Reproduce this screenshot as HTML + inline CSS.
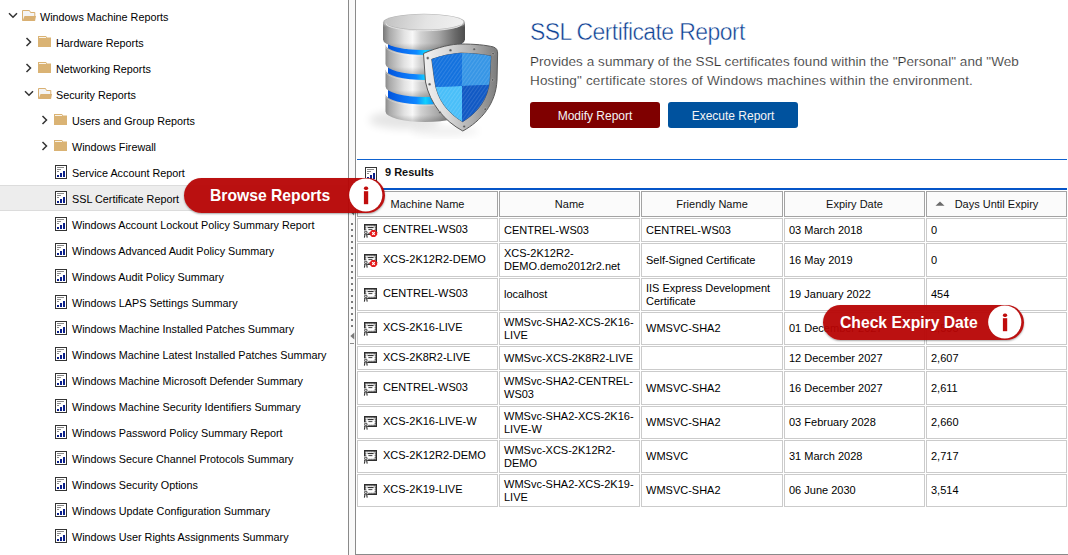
<!DOCTYPE html>
<html><head><meta charset="utf-8">
<style>
*{margin:0;padding:0;box-sizing:border-box}
html,body{width:1068px;height:555px;overflow:hidden;background:#fff}
body{position:relative;font-family:"Liberation Sans",sans-serif;color:#000}
.a{position:absolute}
.tr{position:absolute;font-size:10.8px;line-height:13px;white-space:nowrap;color:#000}
.sel{position:absolute;left:0;top:185px;width:348px;height:26px;background:#ededed;border-top:1px solid #dcdcdc;border-bottom:1px solid #dcdcdc}
.split1{position:absolute;left:348px;top:0;width:1px;height:555px;background:#8a8a8a}
.split2{position:absolute;left:349px;top:0;width:6px;height:555px;background:#f9f9f9}
.split3{position:absolute;left:355px;top:0;width:1px;height:555px;background:#8a8a8a}
.dot{position:absolute;left:351px;width:2px;height:2px;background:#7a7a7a}
.c{position:absolute;border:1px solid #cbcbcb;background:#fff;font-size:11px;line-height:13px;color:#000;padding:0 0 0 4px;white-space:nowrap}
.h{position:absolute;border:1px solid #a3a3a3;background:#fbfbfb;font-size:11px;line-height:13px;color:#111;text-align:center;white-space:nowrap}
.btn{position:absolute;top:102px;height:26px;border-radius:3px;color:#f4f4f4;font-size:12px;line-height:28px;text-align:center}
.call{position:absolute;height:35px;border-radius:17.5px;background:rgba(183,4,4,.95);box-shadow:0 1px 2px rgba(0,0,0,.35)}
.call span{position:absolute;color:#fff;font-weight:bold;font-size:15.7px;line-height:18px;white-space:nowrap}
.ci{position:absolute;width:34px;height:34px;border-radius:50%;background:#fff;border:2px solid #b91212}
</style></head><body>

<!-- TREE -->
<div class="sel"></div>
<svg class="a" style="left:8px;top:12px" width="10" height="7" viewBox="0 0 10 7"><path d="M1 1.2 L5 5.2 L9 1.2" fill="none" stroke="#333" stroke-width="1.5"/></svg>
<svg class="a" style="left:22px;top:10px" width="15" height="11" viewBox="0 0 15 11"><path d="M0.5 0.5 H7.5 L8.5 2.5 H12.8 V10.5 H0.5 Z" fill="#f4f4f4" stroke="#d9b072" stroke-width="1"/><path d="M2.5 6 H14 L12.6 11 H0.5 Z" fill="#d9b072"/></svg>
<div class="tr" style="left:40px;top:10.7px">Windows Machine Reports</div>
<svg class="a" style="left:25px;top:37px" width="8" height="10" viewBox="0 0 8 10"><path d="M1.5 1 L5.5 5 L1.5 9" fill="none" stroke="#333" stroke-width="1.5"/></svg>
<svg class="a" style="left:38px;top:36px" width="13" height="11" viewBox="0 0 13 11"><path d="M0 0 H8 L9 1.5 H13 V11 H0 Z" fill="#dab374"/><rect x="1" y="1" width="7" height="1" fill="#fff" opacity=".85"/></svg>
<div class="tr" style="left:56px;top:36.7px">Hardware Reports</div>
<svg class="a" style="left:25px;top:63px" width="8" height="10" viewBox="0 0 8 10"><path d="M1.5 1 L5.5 5 L1.5 9" fill="none" stroke="#333" stroke-width="1.5"/></svg>
<svg class="a" style="left:38px;top:62px" width="13" height="11" viewBox="0 0 13 11"><path d="M0 0 H8 L9 1.5 H13 V11 H0 Z" fill="#dab374"/><rect x="1" y="1" width="7" height="1" fill="#fff" opacity=".85"/></svg>
<div class="tr" style="left:56px;top:62.7px">Networking Reports</div>
<svg class="a" style="left:24px;top:90px" width="10" height="7" viewBox="0 0 10 7"><path d="M1 1.2 L5 5.2 L9 1.2" fill="none" stroke="#333" stroke-width="1.5"/></svg>
<svg class="a" style="left:38px;top:88px" width="15" height="11" viewBox="0 0 15 11"><path d="M0.5 0.5 H7.5 L8.5 2.5 H12.8 V10.5 H0.5 Z" fill="#f4f4f4" stroke="#d9b072" stroke-width="1"/><path d="M2.5 6 H14 L12.6 11 H0.5 Z" fill="#d9b072"/></svg>
<div class="tr" style="left:56px;top:88.7px">Security Reports</div>
<svg class="a" style="left:41px;top:115px" width="8" height="10" viewBox="0 0 8 10"><path d="M1.5 1 L5.5 5 L1.5 9" fill="none" stroke="#333" stroke-width="1.5"/></svg>
<svg class="a" style="left:54px;top:114px" width="13" height="11" viewBox="0 0 13 11"><path d="M0 0 H8 L9 1.5 H13 V11 H0 Z" fill="#dab374"/><rect x="1" y="1" width="7" height="1" fill="#fff" opacity=".85"/></svg>
<div class="tr" style="left:72px;top:114.7px">Users and Group Reports</div>
<svg class="a" style="left:41px;top:141px" width="8" height="10" viewBox="0 0 8 10"><path d="M1.5 1 L5.5 5 L1.5 9" fill="none" stroke="#333" stroke-width="1.5"/></svg>
<svg class="a" style="left:54px;top:140px" width="13" height="11" viewBox="0 0 13 11"><path d="M0 0 H8 L9 1.5 H13 V11 H0 Z" fill="#dab374"/><rect x="1" y="1" width="7" height="1" fill="#fff" opacity=".85"/></svg>
<div class="tr" style="left:72px;top:140.7px">Windows Firewall</div>
<svg class="a" style="left:55px;top:165px" width="12" height="14" viewBox="0 0 12 14"><rect x="0.5" y="0.5" width="11" height="13" fill="#fff" stroke="#333" stroke-width="1"/><rect x="2" y="2" width="7" height="1" fill="#8a8a8a"/><rect x="2" y="4" width="4" height="1" fill="#8a8a8a"/><rect x="2" y="6" width="2" height="1" fill="#8a8a8a"/><rect x="2" y="10" width="2" height="2" fill="#0a1f8a"/><rect x="5" y="8" width="2" height="4" fill="#0a1f8a"/><rect x="8" y="6" width="2" height="6" fill="#0a1f8a"/></svg>
<div class="tr" style="left:72px;top:166.7px">Service Account Report</div>
<svg class="a" style="left:55px;top:191px" width="12" height="14" viewBox="0 0 12 14"><rect x="0.5" y="0.5" width="11" height="13" fill="#fff" stroke="#333" stroke-width="1"/><rect x="2" y="2" width="7" height="1" fill="#8a8a8a"/><rect x="2" y="4" width="4" height="1" fill="#8a8a8a"/><rect x="2" y="6" width="2" height="1" fill="#8a8a8a"/><rect x="2" y="10" width="2" height="2" fill="#0a1f8a"/><rect x="5" y="8" width="2" height="4" fill="#0a1f8a"/><rect x="8" y="6" width="2" height="6" fill="#0a1f8a"/></svg>
<div class="tr" style="left:72px;top:192.7px">SSL Certificate Report</div>
<svg class="a" style="left:55px;top:217px" width="12" height="14" viewBox="0 0 12 14"><rect x="0.5" y="0.5" width="11" height="13" fill="#fff" stroke="#333" stroke-width="1"/><rect x="2" y="2" width="7" height="1" fill="#8a8a8a"/><rect x="2" y="4" width="4" height="1" fill="#8a8a8a"/><rect x="2" y="6" width="2" height="1" fill="#8a8a8a"/><rect x="2" y="10" width="2" height="2" fill="#0a1f8a"/><rect x="5" y="8" width="2" height="4" fill="#0a1f8a"/><rect x="8" y="6" width="2" height="6" fill="#0a1f8a"/></svg>
<div class="tr" style="left:72px;top:218.7px">Windows Account Lockout Policy Summary Report</div>
<svg class="a" style="left:55px;top:243px" width="12" height="14" viewBox="0 0 12 14"><rect x="0.5" y="0.5" width="11" height="13" fill="#fff" stroke="#333" stroke-width="1"/><rect x="2" y="2" width="7" height="1" fill="#8a8a8a"/><rect x="2" y="4" width="4" height="1" fill="#8a8a8a"/><rect x="2" y="6" width="2" height="1" fill="#8a8a8a"/><rect x="2" y="10" width="2" height="2" fill="#0a1f8a"/><rect x="5" y="8" width="2" height="4" fill="#0a1f8a"/><rect x="8" y="6" width="2" height="6" fill="#0a1f8a"/></svg>
<div class="tr" style="left:72px;top:244.7px">Windows Advanced Audit Policy Summary</div>
<svg class="a" style="left:55px;top:269px" width="12" height="14" viewBox="0 0 12 14"><rect x="0.5" y="0.5" width="11" height="13" fill="#fff" stroke="#333" stroke-width="1"/><rect x="2" y="2" width="7" height="1" fill="#8a8a8a"/><rect x="2" y="4" width="4" height="1" fill="#8a8a8a"/><rect x="2" y="6" width="2" height="1" fill="#8a8a8a"/><rect x="2" y="10" width="2" height="2" fill="#0a1f8a"/><rect x="5" y="8" width="2" height="4" fill="#0a1f8a"/><rect x="8" y="6" width="2" height="6" fill="#0a1f8a"/></svg>
<div class="tr" style="left:72px;top:270.7px">Windows Audit Policy Summary</div>
<svg class="a" style="left:55px;top:295px" width="12" height="14" viewBox="0 0 12 14"><rect x="0.5" y="0.5" width="11" height="13" fill="#fff" stroke="#333" stroke-width="1"/><rect x="2" y="2" width="7" height="1" fill="#8a8a8a"/><rect x="2" y="4" width="4" height="1" fill="#8a8a8a"/><rect x="2" y="6" width="2" height="1" fill="#8a8a8a"/><rect x="2" y="10" width="2" height="2" fill="#0a1f8a"/><rect x="5" y="8" width="2" height="4" fill="#0a1f8a"/><rect x="8" y="6" width="2" height="6" fill="#0a1f8a"/></svg>
<div class="tr" style="left:72px;top:296.7px">Windows LAPS Settings Summary</div>
<svg class="a" style="left:55px;top:321px" width="12" height="14" viewBox="0 0 12 14"><rect x="0.5" y="0.5" width="11" height="13" fill="#fff" stroke="#333" stroke-width="1"/><rect x="2" y="2" width="7" height="1" fill="#8a8a8a"/><rect x="2" y="4" width="4" height="1" fill="#8a8a8a"/><rect x="2" y="6" width="2" height="1" fill="#8a8a8a"/><rect x="2" y="10" width="2" height="2" fill="#0a1f8a"/><rect x="5" y="8" width="2" height="4" fill="#0a1f8a"/><rect x="8" y="6" width="2" height="6" fill="#0a1f8a"/></svg>
<div class="tr" style="left:72px;top:322.7px">Windows Machine Installed Patches Summary</div>
<svg class="a" style="left:55px;top:347px" width="12" height="14" viewBox="0 0 12 14"><rect x="0.5" y="0.5" width="11" height="13" fill="#fff" stroke="#333" stroke-width="1"/><rect x="2" y="2" width="7" height="1" fill="#8a8a8a"/><rect x="2" y="4" width="4" height="1" fill="#8a8a8a"/><rect x="2" y="6" width="2" height="1" fill="#8a8a8a"/><rect x="2" y="10" width="2" height="2" fill="#0a1f8a"/><rect x="5" y="8" width="2" height="4" fill="#0a1f8a"/><rect x="8" y="6" width="2" height="6" fill="#0a1f8a"/></svg>
<div class="tr" style="left:72px;top:348.7px">Windows Machine Latest Installed Patches Summary</div>
<svg class="a" style="left:55px;top:373px" width="12" height="14" viewBox="0 0 12 14"><rect x="0.5" y="0.5" width="11" height="13" fill="#fff" stroke="#333" stroke-width="1"/><rect x="2" y="2" width="7" height="1" fill="#8a8a8a"/><rect x="2" y="4" width="4" height="1" fill="#8a8a8a"/><rect x="2" y="6" width="2" height="1" fill="#8a8a8a"/><rect x="2" y="10" width="2" height="2" fill="#0a1f8a"/><rect x="5" y="8" width="2" height="4" fill="#0a1f8a"/><rect x="8" y="6" width="2" height="6" fill="#0a1f8a"/></svg>
<div class="tr" style="left:72px;top:374.7px">Windows Machine Microsoft Defender Summary</div>
<svg class="a" style="left:55px;top:399px" width="12" height="14" viewBox="0 0 12 14"><rect x="0.5" y="0.5" width="11" height="13" fill="#fff" stroke="#333" stroke-width="1"/><rect x="2" y="2" width="7" height="1" fill="#8a8a8a"/><rect x="2" y="4" width="4" height="1" fill="#8a8a8a"/><rect x="2" y="6" width="2" height="1" fill="#8a8a8a"/><rect x="2" y="10" width="2" height="2" fill="#0a1f8a"/><rect x="5" y="8" width="2" height="4" fill="#0a1f8a"/><rect x="8" y="6" width="2" height="6" fill="#0a1f8a"/></svg>
<div class="tr" style="left:72px;top:400.7px">Windows Machine Security Identifiers Summary</div>
<svg class="a" style="left:55px;top:425px" width="12" height="14" viewBox="0 0 12 14"><rect x="0.5" y="0.5" width="11" height="13" fill="#fff" stroke="#333" stroke-width="1"/><rect x="2" y="2" width="7" height="1" fill="#8a8a8a"/><rect x="2" y="4" width="4" height="1" fill="#8a8a8a"/><rect x="2" y="6" width="2" height="1" fill="#8a8a8a"/><rect x="2" y="10" width="2" height="2" fill="#0a1f8a"/><rect x="5" y="8" width="2" height="4" fill="#0a1f8a"/><rect x="8" y="6" width="2" height="6" fill="#0a1f8a"/></svg>
<div class="tr" style="left:72px;top:426.7px">Windows Password Policy Summary Report</div>
<svg class="a" style="left:55px;top:451px" width="12" height="14" viewBox="0 0 12 14"><rect x="0.5" y="0.5" width="11" height="13" fill="#fff" stroke="#333" stroke-width="1"/><rect x="2" y="2" width="7" height="1" fill="#8a8a8a"/><rect x="2" y="4" width="4" height="1" fill="#8a8a8a"/><rect x="2" y="6" width="2" height="1" fill="#8a8a8a"/><rect x="2" y="10" width="2" height="2" fill="#0a1f8a"/><rect x="5" y="8" width="2" height="4" fill="#0a1f8a"/><rect x="8" y="6" width="2" height="6" fill="#0a1f8a"/></svg>
<div class="tr" style="left:72px;top:452.7px">Windows Secure Channel Protocols Summary</div>
<svg class="a" style="left:55px;top:477px" width="12" height="14" viewBox="0 0 12 14"><rect x="0.5" y="0.5" width="11" height="13" fill="#fff" stroke="#333" stroke-width="1"/><rect x="2" y="2" width="7" height="1" fill="#8a8a8a"/><rect x="2" y="4" width="4" height="1" fill="#8a8a8a"/><rect x="2" y="6" width="2" height="1" fill="#8a8a8a"/><rect x="2" y="10" width="2" height="2" fill="#0a1f8a"/><rect x="5" y="8" width="2" height="4" fill="#0a1f8a"/><rect x="8" y="6" width="2" height="6" fill="#0a1f8a"/></svg>
<div class="tr" style="left:72px;top:478.7px">Windows Security Options</div>
<svg class="a" style="left:55px;top:503px" width="12" height="14" viewBox="0 0 12 14"><rect x="0.5" y="0.5" width="11" height="13" fill="#fff" stroke="#333" stroke-width="1"/><rect x="2" y="2" width="7" height="1" fill="#8a8a8a"/><rect x="2" y="4" width="4" height="1" fill="#8a8a8a"/><rect x="2" y="6" width="2" height="1" fill="#8a8a8a"/><rect x="2" y="10" width="2" height="2" fill="#0a1f8a"/><rect x="5" y="8" width="2" height="4" fill="#0a1f8a"/><rect x="8" y="6" width="2" height="6" fill="#0a1f8a"/></svg>
<div class="tr" style="left:72px;top:504.7px">Windows Update Configuration Summary</div>
<svg class="a" style="left:55px;top:529px" width="12" height="14" viewBox="0 0 12 14"><rect x="0.5" y="0.5" width="11" height="13" fill="#fff" stroke="#333" stroke-width="1"/><rect x="2" y="2" width="7" height="1" fill="#8a8a8a"/><rect x="2" y="4" width="4" height="1" fill="#8a8a8a"/><rect x="2" y="6" width="2" height="1" fill="#8a8a8a"/><rect x="2" y="10" width="2" height="2" fill="#0a1f8a"/><rect x="5" y="8" width="2" height="4" fill="#0a1f8a"/><rect x="8" y="6" width="2" height="6" fill="#0a1f8a"/></svg>
<div class="tr" style="left:72px;top:530.7px">Windows User Rights Assignments Summary</div>

<!-- SPLITTER -->
<div class="split1"></div><div class="split2"></div><div class="split3"></div>
<div class="dot" style="top:223px"></div>
<div class="dot" style="top:229px"></div>
<div class="dot" style="top:235px"></div>
<div class="dot" style="top:241px"></div>
<div class="dot" style="top:247px"></div>
<div class="dot" style="top:253px"></div>
<div class="dot" style="top:259px"></div>
<div class="dot" style="top:265px"></div>
<div class="dot" style="top:271px"></div>
<div class="dot" style="top:277px"></div>
<div class="dot" style="top:283px"></div>
<div class="dot" style="top:289px"></div>
<div class="dot" style="top:295px"></div>
<div class="dot" style="top:301px"></div>
<div class="dot" style="top:307px"></div>
<div class="dot" style="top:313px"></div>
<div class="dot" style="top:319px"></div>
<div class="dot" style="top:325px"></div>
<svg class="a" style="left:350px;top:332px" width="5" height="8" viewBox="0 0 5 8"><path d="M4.3 0.6 L0.3 4 L4.3 7.4 Z" fill="#7a7a7a"/></svg>
<svg class="a" style="left:350px;top:212px" width="5" height="5" viewBox="0 0 5 5"><path d="M0.5 0 H4.5 L4 3.5 Z" fill="#6a6a6a"/></svg>
<div class="a" style="left:350px;top:343px;width:4px;height:1px;background:#8a8a8a"></div>

<!-- PANEL BORDERS -->
<div class="a" style="left:355px;top:554px;width:713px;height:1px;background:#8a8a8a"></div>

<!-- HEADER -->
<svg class="a" style="left:360px;top:5px" width="150" height="135" viewBox="360 5 150 135">
<defs>
<linearGradient id="side" x1="383" y1="0" x2="465" y2="0" gradientUnits="userSpaceOnUse">
<stop offset="0" stop-color="#777"/><stop offset=".08" stop-color="#a9a9a9"/><stop offset=".26" stop-color="#e2e2e2"/><stop offset=".36" stop-color="#f7f7f7"/><stop offset=".46" stop-color="#d2d2d2"/><stop offset=".68" stop-color="#a6a6a6"/><stop offset=".88" stop-color="#6a6a6a"/><stop offset="1" stop-color="#4c4c4c"/>
</linearGradient>
<linearGradient id="cap" x1="390" y1="14" x2="455" y2="32" gradientUnits="userSpaceOnUse"><stop offset="0" stop-color="#c4c4c4"/><stop offset=".55" stop-color="#e4e4e4"/><stop offset="1" stop-color="#efefef"/></linearGradient>
<linearGradient id="band" x1="386" y1="0" x2="462" y2="0" gradientUnits="userSpaceOnUse"><stop offset="0" stop-color="#0050d8"/><stop offset=".2" stop-color="#0a6cf0"/><stop offset=".4" stop-color="#0f88ff"/><stop offset=".52" stop-color="#10d0ff"/><stop offset=".66" stop-color="#0a86f8"/><stop offset="1" stop-color="#0048c0"/></linearGradient>
<linearGradient id="shade" x1="0" y1="0" x2="0" y2="1"><stop offset="0" stop-color="#fff" stop-opacity=".35"/><stop offset=".18" stop-color="#fff" stop-opacity="0"/><stop offset=".75" stop-color="#000" stop-opacity="0"/><stop offset="1" stop-color="#000" stop-opacity=".2"/></linearGradient>
<linearGradient id="frame" x1="423" y1="0" x2="498" y2="0" gradientUnits="userSpaceOnUse">
<stop offset="0" stop-color="#f2f2f2"/><stop offset=".3" stop-color="#dcdcdc"/><stop offset=".65" stop-color="#b0b0b0"/><stop offset="1" stop-color="#7a7a7a"/>
</linearGradient>
<filter id="blur" x="-50%" y="-50%" width="200%" height="200%"><feGaussianBlur stdDeviation="4"/></filter>
<clipPath id="inner"><path d="M431.7 59.2 Q446 54 461 53 Q478 53.5 490.9 55.9 L489.7 80 C488 100 477 113 462.6 121.7 C448 113 437 100 434.5 80 Z"/></clipPath>
<pattern id="stripes" width="3" height="3" patternUnits="userSpaceOnUse" patternTransform="rotate(35)"><rect width="1" height="3" fill="#ffffff" opacity=".12"/></pattern>
</defs>
<ellipse cx="405" cy="120" rx="36" ry="9" fill="#000" opacity=".1" filter="url(#blur)"/>
<ellipse cx="445" cy="131" rx="34" ry="4" fill="#000" opacity=".08" filter="url(#blur)"/>
<path d="M388 34 H462 V112 H388 Z" fill="url(#band)"/>
<path d="M385.5 94 V111.5 A39.5 10.5 0 0 0 464.5 111.5 V94 A39.5 10.5 0 0 1 385.5 94 Z" fill="url(#side)"/><path d="M385.5 94 V111.5 A39.5 10.5 0 0 0 464.5 111.5 V94 A39.5 10.5 0 0 1 385.5 94 Z" fill="url(#shade)"/>
<path d="M385 95.2 A39 10.5 0 0 0 463 95.2" fill="none" stroke="#fff" stroke-width=".8" opacity=".35"/>
<path d="M385.5 69.5 V86.5 A39.5 10.5 0 0 0 464.5 86.5 V69.5 A39.5 10.5 0 0 1 385.5 69.5 Z" fill="url(#side)"/><path d="M385.5 69.5 V86.5 A39.5 10.5 0 0 0 464.5 86.5 V69.5 A39.5 10.5 0 0 1 385.5 69.5 Z" fill="url(#shade)"/>
<path d="M385 70.7 A39 10.5 0 0 0 463 70.7" fill="none" stroke="#fff" stroke-width=".8" opacity=".35"/>
<path d="M385.5 44.5 V64 A39.5 10.5 0 0 0 464.5 64 V44.5 A39.5 10.5 0 0 1 385.5 44.5 Z" fill="url(#side)"/><path d="M385.5 44.5 V64 A39.5 10.5 0 0 0 464.5 64 V44.5 A39.5 10.5 0 0 1 385.5 44.5 Z" fill="url(#shade)"/>
<path d="M385 45.7 A39 10.5 0 0 0 463 45.7" fill="none" stroke="#fff" stroke-width=".8" opacity=".35"/>
<path d="M383 22.4 V39.5 A41 10.5 0 0 0 465 39.5 V22.4 Z" fill="url(#side)"/><path d="M383 22.4 V39.5 A41 10.5 0 0 0 465 39.5 V22.4 Z" fill="url(#shade)"/>
<ellipse cx="424" cy="22.4" rx="41" ry="8.6" fill="#b4b4b4"/>
<ellipse cx="424" cy="21.9" rx="39.5" ry="7.6" fill="url(#cap)"/>
<path d="M386 23.5 A38 7.2 0 0 0 462 23.5" fill="none" stroke="#f4f4f4" stroke-width=".9" opacity=".8"/>
<!-- shield -->
<path d="M423.5 53.5 C438 47 452 44 461 44 C474 44 486 45 493.5 47 Q498 48.5 497.6 54 L497 80 C496 104 481 121 462.8 131 C444.5 121 430 104 425.5 82 Z" fill="url(#frame)" stroke="#5a5a5a" stroke-width="1"/>
<path d="M431.7 59.2 Q446 54 461 53 Q478 53.5 490.9 55.9 L489.7 80 C488 100 477 113 462.6 121.7 C448 113 437 100 434.5 80 Z" fill="#1f6fd6" stroke="#4a4a4a" stroke-width="0.8"/>
<g clip-path="url(#inner)">
<path d="M462 40 H500 V84.3 L462 86 Z" fill="#3796e6"/>
<path d="M420 87.5 L462 86 V135 H420 Z" fill="#4abff9"/>
<path d="M462 86 L500 84.3 V135 H462 Z" fill="#1159c4"/>
<path d="M420 40 H462 V86 L420 87.5 Z" fill="#1472de"/>
<rect x="420" y="40" width="80" height="95" fill="url(#stripes)"/>
</g>
<g fill="#5a5a5a" stroke="#d0d0d0" stroke-width=".4">
<circle cx="427.8" cy="58.1" r="1.3"/><circle cx="450.5" cy="50.3" r="1.3"/><circle cx="474.2" cy="49.2" r="1.3"/><circle cx="493.1" cy="53.6" r="1.3"/><circle cx="492.6" cy="79.9" r="1.3"/><circle cx="429.6" cy="84.3" r="1.3"/><circle cx="439.9" cy="112.5" r="1.3"/><circle cx="464.2" cy="126.5" r="1.3"/><circle cx="485.3" cy="109.2" r="1.3"/>
</g>
</svg>

<div class="a" style="left:530px;top:18px;font-size:23px;line-height:28px;letter-spacing:-0.6px;color:#0d3f93;-webkit-text-stroke:0.45px #fff;paint-order:normal;white-space:nowrap">SSL Certificate Report</div>
<div class="a" style="left:530px;top:52px;font-size:13.5px;line-height:19px;color:#333;-webkit-text-stroke:0.15px #fff;white-space:nowrap"><span style="letter-spacing:0.05px">Provides a summary of the SSL certificates found within the "Personal" and "Web</span><br><span style="letter-spacing:0.18px">Hosting" certificate stores of Windows machines within the environment.</span></div>
<div class="btn" style="left:530px;width:130px;background:#7f0000">Modify Report</div>
<div class="btn" style="left:668px;width:130px;background:#00529e">Execute Report</div>

<div class="a" style="left:357px;top:159px;width:710px;height:1px;background:#0e62d0"></div>
<div class="a" style="left:357px;top:188px;width:710px;height:2px;background:#0555c8"></div>
<svg class="a" style="left:365px;top:167px" width="12" height="14" viewBox="0 0 12 14"><rect x="0.5" y="0.5" width="11" height="13" fill="#fff" stroke="#333" stroke-width="1"/><rect x="2" y="2" width="7" height="1" fill="#8a8a8a"/><rect x="2" y="4" width="4" height="1" fill="#8a8a8a"/><rect x="2" y="6" width="2" height="1" fill="#8a8a8a"/><rect x="2" y="10" width="2" height="2" fill="#0a1f8a"/><rect x="5" y="8" width="2" height="4" fill="#0a1f8a"/><rect x="8" y="6" width="2" height="6" fill="#0a1f8a"/></svg>
<div class="a" style="left:385px;top:166px;font-size:11px;line-height:13px;font-weight:bold;color:#111">9 Results</div>

<div class="h" style="left:357px;top:191px;width:141px;height:26px;padding-top:6px">Machine Name</div>
<div class="h" style="left:499px;top:191px;width:141px;height:26px;padding-top:6px">Name</div>
<div class="h" style="left:641px;top:191px;width:142px;height:26px;padding-top:6px">Friendly Name</div>
<div class="h" style="left:784px;top:191px;width:141px;height:26px;padding-top:6px">Expiry Date</div>
<div class="h" style="left:926px;top:191px;width:141px;height:26px;padding-top:6px">Days Until Expiry</div>
<svg class="a" style="left:935px;top:201px" width="10" height="5" viewBox="0 0 10 5"><path d="M0.5 4.8 L5 0.5 L9.5 4.8 Z" fill="#6a6a6a"/></svg>
<div class="c" style="left:357px;top:218px;width:141px;height:24px"></div>
<svg class="a" style="left:362px;top:222px" width="17" height="17" viewBox="0 0 17 17"><rect x="2.75" y="2.75" width="11.5" height="9.5" fill="#fff" stroke="#2e2e2e" stroke-width="1.5"/><g fill="#3a3a3a"><rect x="4.6" y="3.4" width="1" height="0.9"/><rect x="4.6" y="10.7" width="1" height="0.9"/><rect x="6.6" y="3.4" width="1" height="0.9"/><rect x="6.6" y="10.7" width="1" height="0.9"/><rect x="8.6" y="3.4" width="1" height="0.9"/><rect x="8.6" y="10.7" width="1" height="0.9"/><rect x="10.6" y="3.4" width="1" height="0.9"/><rect x="10.6" y="10.7" width="1" height="0.9"/><rect x="12.0" y="3.4" width="1" height="0.9"/><rect x="12.0" y="10.7" width="1" height="0.9"/><rect x="3.4" y="5.2" width="0.9" height="1"/><rect x="12.7" y="5.2" width="0.9" height="1"/><rect x="3.4" y="7.2" width="0.9" height="1"/><rect x="12.7" y="7.2" width="0.9" height="1"/><rect x="3.4" y="9.0" width="0.9" height="1"/><rect x="12.7" y="9.0" width="0.9" height="1"/></g><rect x="5.6" y="5.0" width="6" height="1.1" fill="#333"/><rect x="6.4" y="7.1" width="4" height="1.0" fill="#444"/><circle cx="3.8" cy="10.4" r="2.3" fill="#fff"/><circle cx="3.8" cy="10.4" r="1.8" fill="#666"/><circle cx="3.8" cy="10.4" r="0.7" fill="#e8e8e8"/><path d="M3.0 12.2 L2.4 15.6 M4.6 12.2 L5.2 15.6" stroke="#333" stroke-width="1.1"/><path d="M9.9 8 H13 L15.2 10.2 V12.8 L13 15 H9.9 L7.8 12.8 V10.2 Z" fill="#e31b1b"/><path d="M10.2 10.1 L12.8 12.9 M12.8 10.1 L10.2 12.9" stroke="#fff" stroke-width="1.2"/></svg>
<div class="a" style="left:383px;top:223px;font-size:11px;line-height:13px;white-space:nowrap">CENTREL-WS03</div>
<div class="c" style="left:499px;top:218px;width:141px;height:24px;padding-top:4.5px">CENTREL-WS03</div>
<div class="c" style="left:641px;top:218px;width:142px;height:24px;padding-top:4.5px">CENTREL-WS03</div>
<div class="c" style="left:784px;top:218px;width:141px;height:24px;padding-top:4.5px">03 March 2018</div>
<div class="c" style="left:926px;top:218px;width:141px;height:24px;padding-top:4.5px">0</div>
<div class="c" style="left:357px;top:243px;width:141px;height:34px"></div>
<svg class="a" style="left:362px;top:252px" width="17" height="17" viewBox="0 0 17 17"><rect x="2.75" y="2.75" width="11.5" height="9.5" fill="#fff" stroke="#2e2e2e" stroke-width="1.5"/><g fill="#3a3a3a"><rect x="4.6" y="3.4" width="1" height="0.9"/><rect x="4.6" y="10.7" width="1" height="0.9"/><rect x="6.6" y="3.4" width="1" height="0.9"/><rect x="6.6" y="10.7" width="1" height="0.9"/><rect x="8.6" y="3.4" width="1" height="0.9"/><rect x="8.6" y="10.7" width="1" height="0.9"/><rect x="10.6" y="3.4" width="1" height="0.9"/><rect x="10.6" y="10.7" width="1" height="0.9"/><rect x="12.0" y="3.4" width="1" height="0.9"/><rect x="12.0" y="10.7" width="1" height="0.9"/><rect x="3.4" y="5.2" width="0.9" height="1"/><rect x="12.7" y="5.2" width="0.9" height="1"/><rect x="3.4" y="7.2" width="0.9" height="1"/><rect x="12.7" y="7.2" width="0.9" height="1"/><rect x="3.4" y="9.0" width="0.9" height="1"/><rect x="12.7" y="9.0" width="0.9" height="1"/></g><rect x="5.6" y="5.0" width="6" height="1.1" fill="#333"/><rect x="6.4" y="7.1" width="4" height="1.0" fill="#444"/><circle cx="3.8" cy="10.4" r="2.3" fill="#fff"/><circle cx="3.8" cy="10.4" r="1.8" fill="#666"/><circle cx="3.8" cy="10.4" r="0.7" fill="#e8e8e8"/><path d="M3.0 12.2 L2.4 15.6 M4.6 12.2 L5.2 15.6" stroke="#333" stroke-width="1.1"/><path d="M9.9 8 H13 L15.2 10.2 V12.8 L13 15 H9.9 L7.8 12.8 V10.2 Z" fill="#e31b1b"/><path d="M10.2 10.1 L12.8 12.9 M12.8 10.1 L10.2 12.9" stroke="#fff" stroke-width="1.2"/></svg>
<div class="a" style="left:383px;top:253px;font-size:11px;line-height:13px;white-space:nowrap">XCS-2K12R2-DEMO</div>
<div class="c" style="left:499px;top:243px;width:141px;height:34px;padding-top:3.0px">XCS-2K12R2-<br>DEMO.demo2012r2.net</div>
<div class="c" style="left:641px;top:243px;width:142px;height:34px;padding-top:9.5px">Self-Signed Certificate</div>
<div class="c" style="left:784px;top:243px;width:141px;height:34px;padding-top:9.5px">16 May 2019</div>
<div class="c" style="left:926px;top:243px;width:141px;height:34px;padding-top:9.5px">0</div>
<div class="c" style="left:357px;top:278px;width:141px;height:33px"></div>
<svg class="a" style="left:362px;top:286px" width="17" height="17" viewBox="0 0 17 17"><rect x="2.75" y="2.75" width="11.5" height="9.5" fill="#fff" stroke="#2e2e2e" stroke-width="1.5"/><g fill="#3a3a3a"><rect x="4.6" y="3.4" width="1" height="0.9"/><rect x="4.6" y="10.7" width="1" height="0.9"/><rect x="6.6" y="3.4" width="1" height="0.9"/><rect x="6.6" y="10.7" width="1" height="0.9"/><rect x="8.6" y="3.4" width="1" height="0.9"/><rect x="8.6" y="10.7" width="1" height="0.9"/><rect x="10.6" y="3.4" width="1" height="0.9"/><rect x="10.6" y="10.7" width="1" height="0.9"/><rect x="12.0" y="3.4" width="1" height="0.9"/><rect x="12.0" y="10.7" width="1" height="0.9"/><rect x="3.4" y="5.2" width="0.9" height="1"/><rect x="12.7" y="5.2" width="0.9" height="1"/><rect x="3.4" y="7.2" width="0.9" height="1"/><rect x="12.7" y="7.2" width="0.9" height="1"/><rect x="3.4" y="9.0" width="0.9" height="1"/><rect x="12.7" y="9.0" width="0.9" height="1"/></g><rect x="5.6" y="5.0" width="6" height="1.1" fill="#333"/><rect x="6.4" y="7.1" width="4" height="1.0" fill="#444"/><circle cx="3.8" cy="10.4" r="2.3" fill="#fff"/><circle cx="3.8" cy="10.4" r="1.8" fill="#666"/><circle cx="3.8" cy="10.4" r="0.7" fill="#e8e8e8"/><path d="M3.0 12.2 L2.4 15.6 M4.6 12.2 L5.2 15.6" stroke="#333" stroke-width="1.1"/></svg>
<div class="a" style="left:383px;top:287px;font-size:11px;line-height:13px;white-space:nowrap">CENTREL-WS03</div>
<div class="c" style="left:499px;top:278px;width:141px;height:33px;padding-top:9.0px">localhost</div>
<div class="c" style="left:641px;top:278px;width:142px;height:33px;padding-top:2.5px">IIS Express Development<br>Certificate</div>
<div class="c" style="left:784px;top:278px;width:141px;height:33px;padding-top:9.0px">19 January 2022</div>
<div class="c" style="left:926px;top:278px;width:141px;height:33px;padding-top:9.0px">454</div>
<div class="c" style="left:357px;top:312px;width:141px;height:33px"></div>
<svg class="a" style="left:362px;top:320px" width="17" height="17" viewBox="0 0 17 17"><rect x="2.75" y="2.75" width="11.5" height="9.5" fill="#fff" stroke="#2e2e2e" stroke-width="1.5"/><g fill="#3a3a3a"><rect x="4.6" y="3.4" width="1" height="0.9"/><rect x="4.6" y="10.7" width="1" height="0.9"/><rect x="6.6" y="3.4" width="1" height="0.9"/><rect x="6.6" y="10.7" width="1" height="0.9"/><rect x="8.6" y="3.4" width="1" height="0.9"/><rect x="8.6" y="10.7" width="1" height="0.9"/><rect x="10.6" y="3.4" width="1" height="0.9"/><rect x="10.6" y="10.7" width="1" height="0.9"/><rect x="12.0" y="3.4" width="1" height="0.9"/><rect x="12.0" y="10.7" width="1" height="0.9"/><rect x="3.4" y="5.2" width="0.9" height="1"/><rect x="12.7" y="5.2" width="0.9" height="1"/><rect x="3.4" y="7.2" width="0.9" height="1"/><rect x="12.7" y="7.2" width="0.9" height="1"/><rect x="3.4" y="9.0" width="0.9" height="1"/><rect x="12.7" y="9.0" width="0.9" height="1"/></g><rect x="5.6" y="5.0" width="6" height="1.1" fill="#333"/><rect x="6.4" y="7.1" width="4" height="1.0" fill="#444"/><circle cx="3.8" cy="10.4" r="2.3" fill="#fff"/><circle cx="3.8" cy="10.4" r="1.8" fill="#666"/><circle cx="3.8" cy="10.4" r="0.7" fill="#e8e8e8"/><path d="M3.0 12.2 L2.4 15.6 M4.6 12.2 L5.2 15.6" stroke="#333" stroke-width="1.1"/></svg>
<div class="a" style="left:383px;top:321px;font-size:11px;line-height:13px;white-space:nowrap">XCS-2K16-LIVE</div>
<div class="c" style="left:499px;top:312px;width:141px;height:33px;padding-top:2.5px">WMSvc-SHA2-XCS-2K16-<br>LIVE</div>
<div class="c" style="left:641px;top:312px;width:142px;height:33px;padding-top:9.0px">WMSVC-SHA2</div>
<div class="c" style="left:784px;top:312px;width:141px;height:33px;padding-top:9.0px">01 December 2027</div>
<div class="c" style="left:926px;top:312px;width:141px;height:33px;padding-top:9.0px">2,595</div>
<div class="c" style="left:357px;top:346px;width:141px;height:24px"></div>
<svg class="a" style="left:362px;top:350px" width="17" height="17" viewBox="0 0 17 17"><rect x="2.75" y="2.75" width="11.5" height="9.5" fill="#fff" stroke="#2e2e2e" stroke-width="1.5"/><g fill="#3a3a3a"><rect x="4.6" y="3.4" width="1" height="0.9"/><rect x="4.6" y="10.7" width="1" height="0.9"/><rect x="6.6" y="3.4" width="1" height="0.9"/><rect x="6.6" y="10.7" width="1" height="0.9"/><rect x="8.6" y="3.4" width="1" height="0.9"/><rect x="8.6" y="10.7" width="1" height="0.9"/><rect x="10.6" y="3.4" width="1" height="0.9"/><rect x="10.6" y="10.7" width="1" height="0.9"/><rect x="12.0" y="3.4" width="1" height="0.9"/><rect x="12.0" y="10.7" width="1" height="0.9"/><rect x="3.4" y="5.2" width="0.9" height="1"/><rect x="12.7" y="5.2" width="0.9" height="1"/><rect x="3.4" y="7.2" width="0.9" height="1"/><rect x="12.7" y="7.2" width="0.9" height="1"/><rect x="3.4" y="9.0" width="0.9" height="1"/><rect x="12.7" y="9.0" width="0.9" height="1"/></g><rect x="5.6" y="5.0" width="6" height="1.1" fill="#333"/><rect x="6.4" y="7.1" width="4" height="1.0" fill="#444"/><circle cx="3.8" cy="10.4" r="2.3" fill="#fff"/><circle cx="3.8" cy="10.4" r="1.8" fill="#666"/><circle cx="3.8" cy="10.4" r="0.7" fill="#e8e8e8"/><path d="M3.0 12.2 L2.4 15.6 M4.6 12.2 L5.2 15.6" stroke="#333" stroke-width="1.1"/></svg>
<div class="a" style="left:383px;top:351px;font-size:11px;line-height:13px;white-space:nowrap">XCS-2K8R2-LIVE</div>
<div class="c" style="left:499px;top:346px;width:141px;height:24px;padding-top:4.5px">WMSvc-XCS-2K8R2-LIVE</div>
<div class="c" style="left:641px;top:346px;width:142px;height:24px;padding-top:4.5px"></div>
<div class="c" style="left:784px;top:346px;width:141px;height:24px;padding-top:4.5px">12 December 2027</div>
<div class="c" style="left:926px;top:346px;width:141px;height:24px;padding-top:4.5px">2,607</div>
<div class="c" style="left:357px;top:371px;width:141px;height:34px"></div>
<svg class="a" style="left:362px;top:380px" width="17" height="17" viewBox="0 0 17 17"><rect x="2.75" y="2.75" width="11.5" height="9.5" fill="#fff" stroke="#2e2e2e" stroke-width="1.5"/><g fill="#3a3a3a"><rect x="4.6" y="3.4" width="1" height="0.9"/><rect x="4.6" y="10.7" width="1" height="0.9"/><rect x="6.6" y="3.4" width="1" height="0.9"/><rect x="6.6" y="10.7" width="1" height="0.9"/><rect x="8.6" y="3.4" width="1" height="0.9"/><rect x="8.6" y="10.7" width="1" height="0.9"/><rect x="10.6" y="3.4" width="1" height="0.9"/><rect x="10.6" y="10.7" width="1" height="0.9"/><rect x="12.0" y="3.4" width="1" height="0.9"/><rect x="12.0" y="10.7" width="1" height="0.9"/><rect x="3.4" y="5.2" width="0.9" height="1"/><rect x="12.7" y="5.2" width="0.9" height="1"/><rect x="3.4" y="7.2" width="0.9" height="1"/><rect x="12.7" y="7.2" width="0.9" height="1"/><rect x="3.4" y="9.0" width="0.9" height="1"/><rect x="12.7" y="9.0" width="0.9" height="1"/></g><rect x="5.6" y="5.0" width="6" height="1.1" fill="#333"/><rect x="6.4" y="7.1" width="4" height="1.0" fill="#444"/><circle cx="3.8" cy="10.4" r="2.3" fill="#fff"/><circle cx="3.8" cy="10.4" r="1.8" fill="#666"/><circle cx="3.8" cy="10.4" r="0.7" fill="#e8e8e8"/><path d="M3.0 12.2 L2.4 15.6 M4.6 12.2 L5.2 15.6" stroke="#333" stroke-width="1.1"/></svg>
<div class="a" style="left:383px;top:381px;font-size:11px;line-height:13px;white-space:nowrap">CENTREL-WS03</div>
<div class="c" style="left:499px;top:371px;width:141px;height:34px;padding-top:3.0px">WMSvc-SHA2-CENTREL-<br>WS03</div>
<div class="c" style="left:641px;top:371px;width:142px;height:34px;padding-top:9.5px">WMSVC-SHA2</div>
<div class="c" style="left:784px;top:371px;width:141px;height:34px;padding-top:9.5px">16 December 2027</div>
<div class="c" style="left:926px;top:371px;width:141px;height:34px;padding-top:9.5px">2,611</div>
<div class="c" style="left:357px;top:406px;width:141px;height:33px"></div>
<svg class="a" style="left:362px;top:414px" width="17" height="17" viewBox="0 0 17 17"><rect x="2.75" y="2.75" width="11.5" height="9.5" fill="#fff" stroke="#2e2e2e" stroke-width="1.5"/><g fill="#3a3a3a"><rect x="4.6" y="3.4" width="1" height="0.9"/><rect x="4.6" y="10.7" width="1" height="0.9"/><rect x="6.6" y="3.4" width="1" height="0.9"/><rect x="6.6" y="10.7" width="1" height="0.9"/><rect x="8.6" y="3.4" width="1" height="0.9"/><rect x="8.6" y="10.7" width="1" height="0.9"/><rect x="10.6" y="3.4" width="1" height="0.9"/><rect x="10.6" y="10.7" width="1" height="0.9"/><rect x="12.0" y="3.4" width="1" height="0.9"/><rect x="12.0" y="10.7" width="1" height="0.9"/><rect x="3.4" y="5.2" width="0.9" height="1"/><rect x="12.7" y="5.2" width="0.9" height="1"/><rect x="3.4" y="7.2" width="0.9" height="1"/><rect x="12.7" y="7.2" width="0.9" height="1"/><rect x="3.4" y="9.0" width="0.9" height="1"/><rect x="12.7" y="9.0" width="0.9" height="1"/></g><rect x="5.6" y="5.0" width="6" height="1.1" fill="#333"/><rect x="6.4" y="7.1" width="4" height="1.0" fill="#444"/><circle cx="3.8" cy="10.4" r="2.3" fill="#fff"/><circle cx="3.8" cy="10.4" r="1.8" fill="#666"/><circle cx="3.8" cy="10.4" r="0.7" fill="#e8e8e8"/><path d="M3.0 12.2 L2.4 15.6 M4.6 12.2 L5.2 15.6" stroke="#333" stroke-width="1.1"/></svg>
<div class="a" style="left:383px;top:415px;font-size:11px;line-height:13px;white-space:nowrap">XCS-2K16-LIVE-W</div>
<div class="c" style="left:499px;top:406px;width:141px;height:33px;padding-top:2.5px">WMSvc-SHA2-XCS-2K16-<br>LIVE-W</div>
<div class="c" style="left:641px;top:406px;width:142px;height:33px;padding-top:9.0px">WMSVC-SHA2</div>
<div class="c" style="left:784px;top:406px;width:141px;height:33px;padding-top:9.0px">03 February 2028</div>
<div class="c" style="left:926px;top:406px;width:141px;height:33px;padding-top:9.0px">2,660</div>
<div class="c" style="left:357px;top:440px;width:141px;height:33px"></div>
<svg class="a" style="left:362px;top:448px" width="17" height="17" viewBox="0 0 17 17"><rect x="2.75" y="2.75" width="11.5" height="9.5" fill="#fff" stroke="#2e2e2e" stroke-width="1.5"/><g fill="#3a3a3a"><rect x="4.6" y="3.4" width="1" height="0.9"/><rect x="4.6" y="10.7" width="1" height="0.9"/><rect x="6.6" y="3.4" width="1" height="0.9"/><rect x="6.6" y="10.7" width="1" height="0.9"/><rect x="8.6" y="3.4" width="1" height="0.9"/><rect x="8.6" y="10.7" width="1" height="0.9"/><rect x="10.6" y="3.4" width="1" height="0.9"/><rect x="10.6" y="10.7" width="1" height="0.9"/><rect x="12.0" y="3.4" width="1" height="0.9"/><rect x="12.0" y="10.7" width="1" height="0.9"/><rect x="3.4" y="5.2" width="0.9" height="1"/><rect x="12.7" y="5.2" width="0.9" height="1"/><rect x="3.4" y="7.2" width="0.9" height="1"/><rect x="12.7" y="7.2" width="0.9" height="1"/><rect x="3.4" y="9.0" width="0.9" height="1"/><rect x="12.7" y="9.0" width="0.9" height="1"/></g><rect x="5.6" y="5.0" width="6" height="1.1" fill="#333"/><rect x="6.4" y="7.1" width="4" height="1.0" fill="#444"/><circle cx="3.8" cy="10.4" r="2.3" fill="#fff"/><circle cx="3.8" cy="10.4" r="1.8" fill="#666"/><circle cx="3.8" cy="10.4" r="0.7" fill="#e8e8e8"/><path d="M3.0 12.2 L2.4 15.6 M4.6 12.2 L5.2 15.6" stroke="#333" stroke-width="1.1"/></svg>
<div class="a" style="left:383px;top:449px;font-size:11px;line-height:13px;white-space:nowrap">XCS-2K12R2-DEMO</div>
<div class="c" style="left:499px;top:440px;width:141px;height:33px;padding-top:2.5px">WMSvc-XCS-2K12R2-<br>DEMO</div>
<div class="c" style="left:641px;top:440px;width:142px;height:33px;padding-top:9.0px">WMSVC</div>
<div class="c" style="left:784px;top:440px;width:141px;height:33px;padding-top:9.0px">31 March 2028</div>
<div class="c" style="left:926px;top:440px;width:141px;height:33px;padding-top:9.0px">2,717</div>
<div class="c" style="left:357px;top:474px;width:141px;height:33px"></div>
<svg class="a" style="left:362px;top:482px" width="17" height="17" viewBox="0 0 17 17"><rect x="2.75" y="2.75" width="11.5" height="9.5" fill="#fff" stroke="#2e2e2e" stroke-width="1.5"/><g fill="#3a3a3a"><rect x="4.6" y="3.4" width="1" height="0.9"/><rect x="4.6" y="10.7" width="1" height="0.9"/><rect x="6.6" y="3.4" width="1" height="0.9"/><rect x="6.6" y="10.7" width="1" height="0.9"/><rect x="8.6" y="3.4" width="1" height="0.9"/><rect x="8.6" y="10.7" width="1" height="0.9"/><rect x="10.6" y="3.4" width="1" height="0.9"/><rect x="10.6" y="10.7" width="1" height="0.9"/><rect x="12.0" y="3.4" width="1" height="0.9"/><rect x="12.0" y="10.7" width="1" height="0.9"/><rect x="3.4" y="5.2" width="0.9" height="1"/><rect x="12.7" y="5.2" width="0.9" height="1"/><rect x="3.4" y="7.2" width="0.9" height="1"/><rect x="12.7" y="7.2" width="0.9" height="1"/><rect x="3.4" y="9.0" width="0.9" height="1"/><rect x="12.7" y="9.0" width="0.9" height="1"/></g><rect x="5.6" y="5.0" width="6" height="1.1" fill="#333"/><rect x="6.4" y="7.1" width="4" height="1.0" fill="#444"/><circle cx="3.8" cy="10.4" r="2.3" fill="#fff"/><circle cx="3.8" cy="10.4" r="1.8" fill="#666"/><circle cx="3.8" cy="10.4" r="0.7" fill="#e8e8e8"/><path d="M3.0 12.2 L2.4 15.6 M4.6 12.2 L5.2 15.6" stroke="#333" stroke-width="1.1"/></svg>
<div class="a" style="left:383px;top:483px;font-size:11px;line-height:13px;white-space:nowrap">XCS-2K19-LIVE</div>
<div class="c" style="left:499px;top:474px;width:141px;height:33px;padding-top:2.5px">WMSvc-SHA2-XCS-2K19-<br>LIVE</div>
<div class="c" style="left:641px;top:474px;width:142px;height:33px;padding-top:9.0px">WMSVC-SHA2</div>
<div class="c" style="left:784px;top:474px;width:141px;height:33px;padding-top:9.0px">06 June 2030</div>
<div class="c" style="left:926px;top:474px;width:141px;height:33px;padding-top:9.0px">3,514</div>

<!-- CALLOUTS -->
<div class="call" style="left:184px;top:178px;width:201px"><span style="left:26px;top:9px">Browse Reports</span><svg class="a" style="left:165px;top:0" width="34" height="34" viewBox="0 0 34 34"><circle cx="16.75" cy="17" r="16.6" fill="#fff"/><rect x="14.9" y="8.5" width="4.3" height="3.4" rx="1.7" fill="#c00d0d"/><rect x="14.9" y="13.2" width="4.3" height="13" fill="#c00d0d"/></svg></div>
<div class="call" style="left:823px;top:305px;width:201px"><span style="left:17px;top:9px">Check Expiry Date</span><svg class="a" style="left:165px;top:0" width="34" height="34" viewBox="0 0 34 34"><circle cx="16.75" cy="17" r="16.6" fill="#fff"/><rect x="14.9" y="8.5" width="4.3" height="3.4" rx="1.7" fill="#c00d0d"/><rect x="14.9" y="13.2" width="4.3" height="13" fill="#c00d0d"/></svg></div>

</body></html>
